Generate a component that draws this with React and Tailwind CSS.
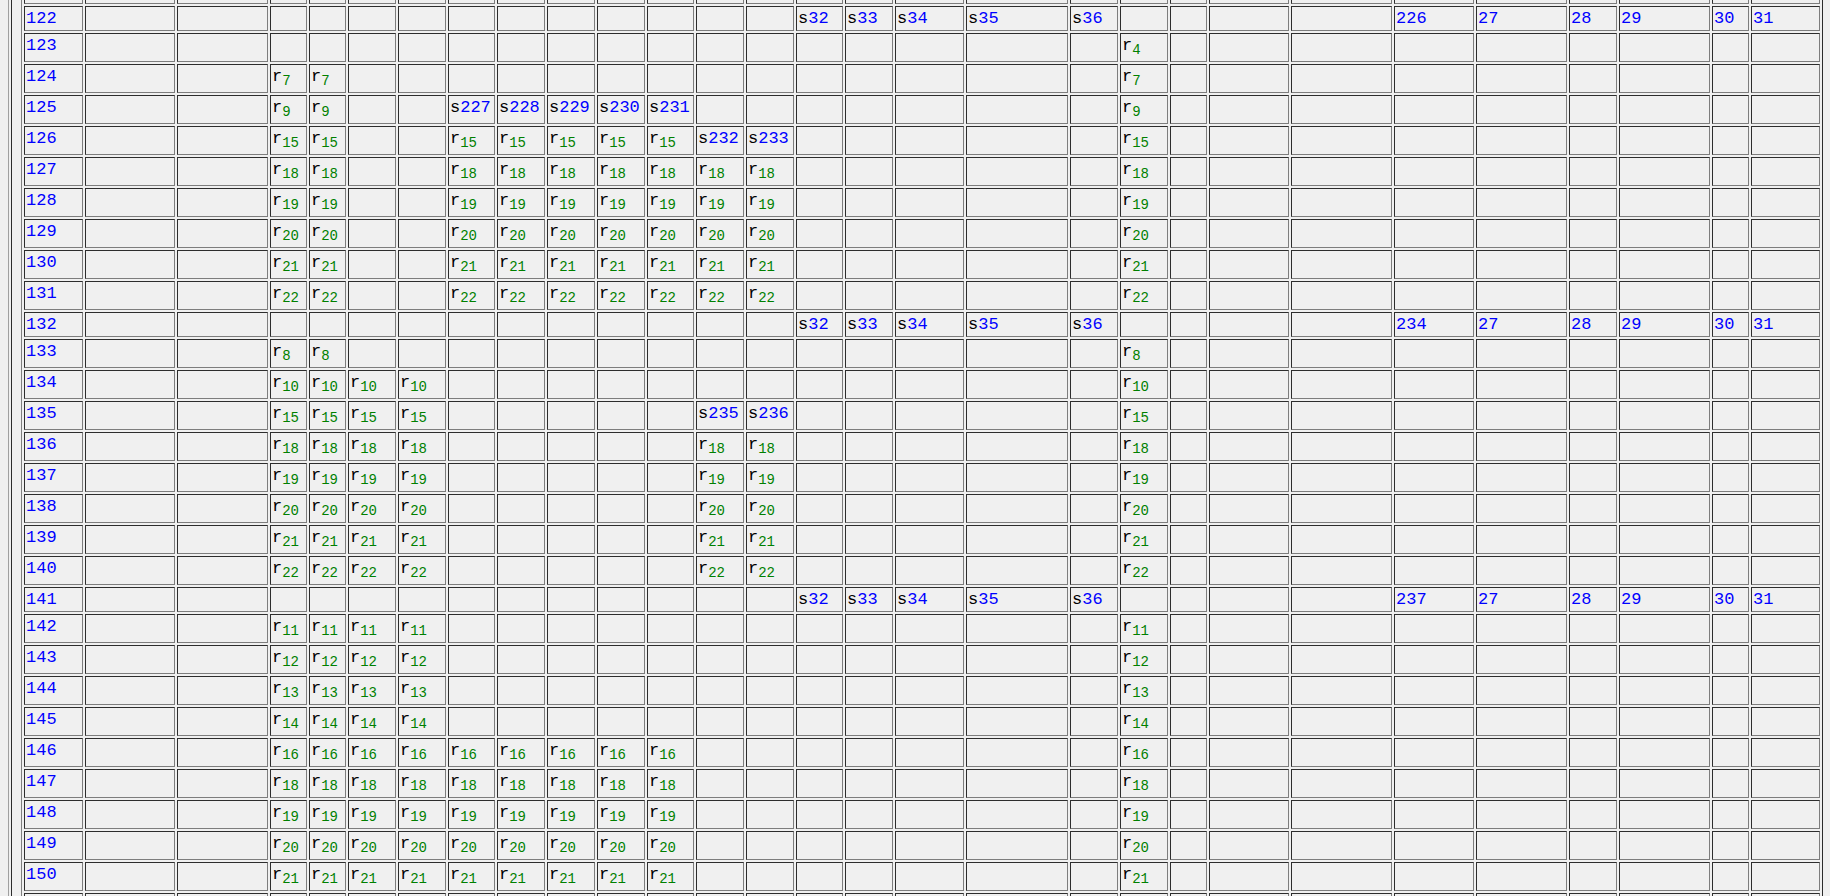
const W = [
  "w-[59px]", "w-[90px]", "w-[91px]", "w-[37px]", "w-[37px]", "w-[48px]", "w-[48px]", "w-[47px]",
  "w-[48px]", "w-[48px]", "w-[48px]", "w-[47px]", "w-[48px]", "w-[48px]", "w-[47px]", "w-[48px]",
  "w-[69px]", "w-[102px]", "w-[48px]", "w-[48px]", "w-[37px]", "w-[80px]", "w-[101px]", "w-[80px]",
  "w-[91px]", "w-[48px]", "w-[91px]", "w-[37px]", "w-[69px]",
];

const cellCls = "shrink-0 overflow-hidden whitespace-nowrap border border-t-[#2d2d2d] border-l-[#2d2d2d] border-r-[#7d7d7d] border-b-[#7d7d7d] p-[1px] text-[17px] leading-[21px]";

// shift row: s32..s36 then the goto columns
const shiftRow = (n, g) => ({
  n, tall: false,
  c: {
    14: ["s", "32"], 15: ["s", "33"], 16: ["s", "34"], 17: ["s", "35"], 18: ["s", "36"],
    23: ["g", g], 24: ["g", "27"], 25: ["g", "28"], 26: ["g", "29"], 27: ["g", "30"], 28: ["g", "31"],
  },
});

const reduceRow = (n, v, cols, extra = {}) => {
  const c = { 19: ["r", v] };
  cols.forEach((i) => (c[i] = ["r", v]));
  return { n, tall: true, c: { ...c, ...extra } };
};

const A = [3, 4];
const B = [3, 4, 5, 6];
const C = [3, 4, 7, 8, 9, 10, 11, 12, 13];
const D = [3, 4, 5, 6, 12, 13];
const E = [3, 4, 5, 6, 7, 8, 9, 10, 11];

const rows = [
  { n: "", tall: true, c: {} },
  shiftRow("122", "226"),
  reduceRow("123", "4", []),
  reduceRow("124", "7", A),
  reduceRow("125", "9", A, { 7: ["s", "227"], 8: ["s", "228"], 9: ["s", "229"], 10: ["s", "230"], 11: ["s", "231"] }),
  reduceRow("126", "15", [3, 4, 7, 8, 9, 10, 11], { 12: ["s", "232"], 13: ["s", "233"] }),
  reduceRow("127", "18", C),
  reduceRow("128", "19", C),
  reduceRow("129", "20", C),
  reduceRow("130", "21", C),
  reduceRow("131", "22", C),
  shiftRow("132", "234"),
  reduceRow("133", "8", A),
  reduceRow("134", "10", B),
  reduceRow("135", "15", B, { 12: ["s", "235"], 13: ["s", "236"] }),
  reduceRow("136", "18", D),
  reduceRow("137", "19", D),
  reduceRow("138", "20", D),
  reduceRow("139", "21", D),
  reduceRow("140", "22", D),
  shiftRow("141", "237"),
  reduceRow("142", "11", B),
  reduceRow("143", "12", B),
  reduceRow("144", "13", B),
  reduceRow("145", "14", B),
  reduceRow("146", "16", E),
  reduceRow("147", "18", E),
  reduceRow("148", "19", E),
  reduceRow("149", "20", E),
  reduceRow("150", "21", E),
  { n: "", tall: true, c: {} },
];

function Entry({ e }) {
  if (!e) return null;
  const [k, v] = e;
  if (k === "g") return <span className="text-[#0000ff]">{v}</span>;
  if (k === "s") return <span><span className="text-black">s</span><span className="text-[#0000ff]">{v}</span></span>;
  return (
    <span>
      <span className="text-black">r</span>
      <span className="relative top-[4px] text-[14px] leading-none text-[#008000]">{v}</span>
    </span>
  );
}

function Row({ r }) {
  const h = r.tall ? "h-[29px]" : "h-[25px]";
  return (
    <div className="flex gap-[2px]">
      {W.map((w, i) => (
        <div key={i} className={`${cellCls} ${w} ${h}`}>
          {i === 0 ? <span className="text-[#0000ff]">{r.n}</span> : <Entry e={r.c[i]} />}
        </div>
      ))}
    </div>
  );
}

export default function App() {
  return (
    <div className="h-[896px] w-[1830px] overflow-hidden bg-[#f0f0f0] font-['Liberation_Mono','Courier_New',monospace]">
      <div className="ml-[8px] h-full border-l border-l-[#a0a0a0] pl-[2px]">
        <div className="h-full border-l border-l-[#2d2d2d] pl-[9px]">
          <div className="h-full w-[1802px] overflow-hidden border-l border-r border-l-[#808080] border-r-[#2d2d2d] px-[2px]">
            <div className="mt-[-25px] flex flex-col gap-[2px]">
              {rows.map((r, i) => (
                <Row key={i} r={r} />
              ))}
            </div>
          </div>
        </div>
      </div>
    </div>
  );
}
